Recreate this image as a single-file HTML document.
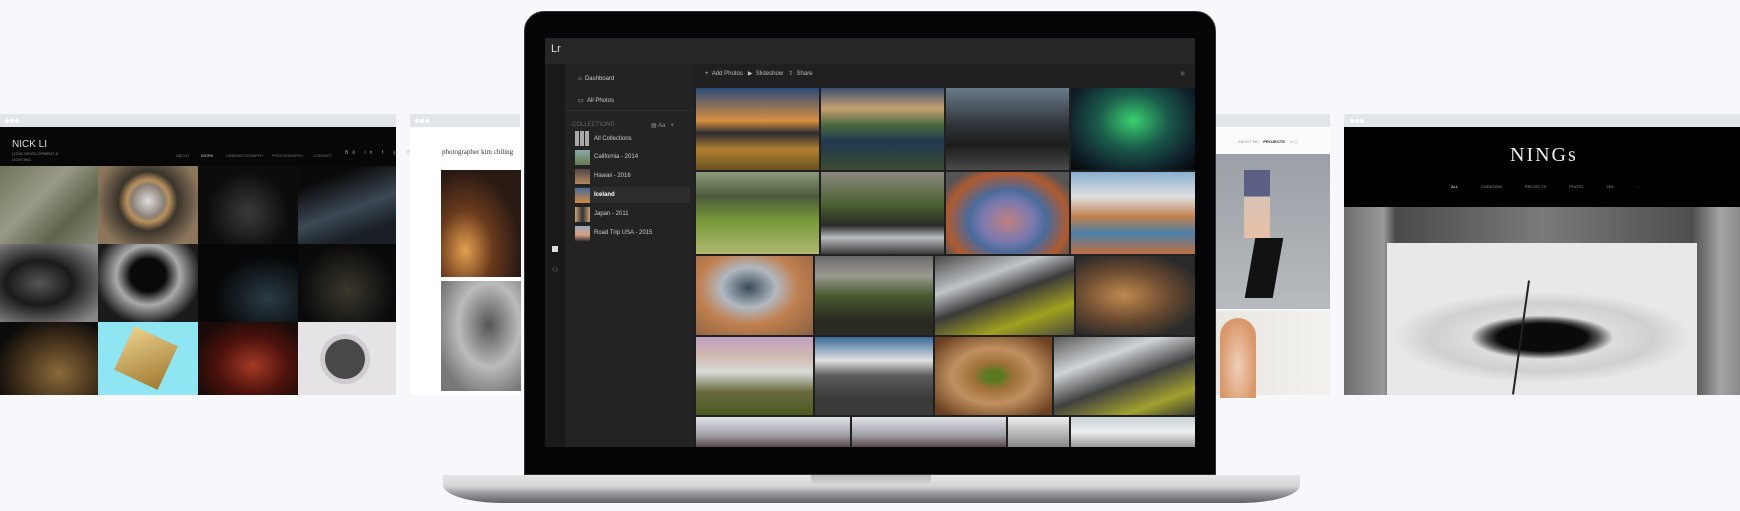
<!DOCTYPE html>
<html><head><meta charset="utf-8"><style>
*{margin:0;padding:0;box-sizing:border-box}
body{width:1740px;height:511px;background:#f6f8fb;position:relative;overflow:hidden;font-family:"Liberation Sans",sans-serif}
.abs{position:absolute}
.bar{background:#e2e6ea;height:13px}
.bar i{position:absolute;top:5px;width:4px;height:4px;border-radius:50%;background:#fff}
.t{position:absolute}
.lr .t{color:#ccc;font-size:6px;white-space:nowrap}
.nv{position:absolute;top:153px;color:#777;font-size:4px;white-space:nowrap}
</style></head><body>

<!-- Left browser -->
<div class="abs bar" style="left:0;top:114px;width:396px"><i style="left:5px"></i><i style="left:10px"></i><i style="left:15px"></i></div>
<div class="abs" style="left:0;top:127px;width:396px;height:268px;background:#070707"></div>
<div class="t" style="left:12px;top:139px;color:#ddd;font-size:10px">NICK LI</div>
<div class="t" style="left:12px;top:151px;color:#888;font-size:4px;line-height:6px">LOOK DEVELOPMENT &amp;<br>LIGHTING</div>
<div class="nv" style="left:176px">ABOUT</div>
<div class="nv" style="left:201px;color:#ccc">WORK</div>
<div class="nv" style="left:226px">CINEMATOGRAPHY</div>
<div class="nv" style="left:272px">PHOTOGRAPHY</div>
<div class="nv" style="left:313px">CONTACT</div>
<div class="t" style="left:345px;top:150px;color:#999;font-size:5px;letter-spacing:4px;white-space:nowrap">Bē in f ◎ ▽</div>
<div class="abs" style="left:0;top:166px;width:98px;height:78px;background:linear-gradient(135deg,#6f7458,#9a9a88 40%,#5d6448 70%,#8b8d7c)"></div>
<div class="abs" style="left:98px;top:166px;width:100px;height:78px;background:radial-gradient(circle at 50% 45%,#ddd 0,#8a7f73 25%,#b8905d 32%,#3a342c 45%,#8c775c 80%)"></div>
<div class="abs" style="left:198px;top:166px;width:100px;height:78px;background:radial-gradient(circle at 50% 60%,#3a3a3a,#0c0c0c 60%)"></div>
<div class="abs" style="left:298px;top:166px;width:98px;height:78px;background:linear-gradient(160deg,#0a0a0a 20%,#3c4854 55%,#1a2025 80%)"></div>
<div class="abs" style="left:0;top:244px;width:98px;height:78px;background:radial-gradient(ellipse at 40% 50%,#555 0,#1a1a1a 40%,#8a8a8a 90%)"></div>
<div class="abs" style="left:98px;top:244px;width:100px;height:78px;background:radial-gradient(ellipse at 50% 40%,#0a0a0a 25%,#aaa 45%,#1b1b1b 75%)"></div>
<div class="abs" style="left:198px;top:244px;width:100px;height:78px;background:radial-gradient(ellipse at 70% 70%,#2a3a44,#050708 55%)"></div>
<div class="abs" style="left:298px;top:244px;width:98px;height:78px;background:radial-gradient(ellipse at 50% 60%,#3b372d,#0a0a0a 70%)"></div>
<div class="abs" style="left:0;top:322px;width:98px;height:73px;background:radial-gradient(ellipse at 60% 70%,#8a6a3a,#3d2c18 50%,#0b0b0b 80%)"></div>
<div class="abs" style="left:98px;top:322px;width:100px;height:73px;background:#8fe6f2;overflow:hidden"><div class="abs" style="left:24px;top:12px;width:48px;height:48px;background:linear-gradient(135deg,#e9d08b,#a17a32);transform:rotate(25deg)"></div></div>
<div class="abs" style="left:198px;top:322px;width:100px;height:73px;background:radial-gradient(ellipse at 55% 60%,#a33a25,#4d120c 45%,#1a0b08 80%)"></div>
<div class="abs" style="left:298px;top:322px;width:98px;height:73px;background:#e6e3e6;overflow:hidden"><div class="abs" style="left:22px;top:12px;width:50px;height:50px;border-radius:50%;background:#4a474a;border:5px solid #cfcbd0"></div></div>

<!-- Second browser -->
<div class="abs bar" style="left:410px;top:114px;width:110px"><i style="left:5px"></i><i style="left:10px"></i><i style="left:15px"></i></div>
<div class="abs" style="left:410px;top:127px;width:110px;height:268px;background:#fff"></div>
<div class="t" style="left:442px;top:148px;color:#333;font-size:7px;font-family:'Liberation Serif',serif">photographer kim chiling</div>
<div class="abs" style="left:441px;top:170px;width:80px;height:107px;background:radial-gradient(ellipse at 30% 75%,#e4a050,#6a3a1c 35%,#2a1a14 70%)"></div>
<div class="abs" style="left:441px;top:281px;width:80px;height:110px;background:radial-gradient(ellipse at 60% 40%,#555 0,#bbb 45%,#777 80%)"></div>

<!-- Third browser -->
<div class="abs bar" style="left:1210px;top:114px;width:120px"></div>
<div class="abs" style="left:1210px;top:127px;width:120px;height:27px;background:#fbfbfb"></div>
<div class="t" style="left:1238px;top:139px;color:#999;font-size:4px">ABOUT ME &nbsp;&nbsp;&nbsp;<b style="color:#222">PROJECTS</b> &nbsp;&nbsp;&nbsp; in ▢</div>
<div class="abs" style="left:1210px;top:154px;width:120px;height:155px;background:linear-gradient(180deg,#9aa0a6,#b7bbbf)"></div>
<div class="abs" style="left:1244px;top:170px;width:26px;height:68px;background:linear-gradient(#5b5f84 0 38%,#d8c3b3 40%,#e8c0a6)"></div>
<div class="abs" style="left:1250px;top:238px;width:28px;height:60px;background:#111;transform:skewX(-10deg)"></div>
<div class="abs" style="left:1210px;top:311px;width:120px;height:84px;background:linear-gradient(90deg,#e9e6e2,#f3f1ee)"></div>
<div class="abs" style="left:1220px;top:318px;width:36px;height:80px;border-radius:18px 18px 0 0;background:radial-gradient(ellipse at 50% 60%,#f0d0b8,#d9986c 70%)"></div>

<!-- Fourth browser -->
<div class="abs bar" style="left:1344px;top:114px;width:396px"><i style="left:6px"></i><i style="left:11px"></i><i style="left:16px"></i></div>
<div class="abs" style="left:1344px;top:127px;width:396px;height:80px;background:#000"></div>
<div class="t" style="left:1510px;top:144px;color:#eee;font-size:20px;font-family:'Liberation Serif',serif;letter-spacing:2px">NINGs</div>
<div class="t" style="left:1451px;top:184px;color:#999;font-size:4px;word-spacing:22px;white-space:nowrap"><span style="color:#fff">ALL</span> CURATION PROJECTS PHOTO 2D1 ...</div>
<div class="abs" style="left:1344px;top:207px;width:396px;height:188px;background:linear-gradient(90deg,#6e6e6e,#9a9a9a 10%,#4a4a4a 13%,#7a7a7a 50%,#4e4e4e 88%,#a5a5a5 95%,#8a8a8a)"></div>
<div class="abs" style="left:1387px;top:243px;width:310px;height:152px;background:radial-gradient(ellipse 48% 30% at 50% 62%,#0a0a0a 0 30%,#555 38%,#ddd 48%,#d0d0d0 75%,#e8e8e8)"></div>
<div class="abs" style="left:1520px;top:280px;width:2px;height:115px;background:#222;transform:rotate(8deg)"></div>

<!-- Laptop -->
<div class="abs" style="left:443px;top:475px;width:857px;height:28px;border-radius:0 0 60px 60px/0 0 18px 18px;background:linear-gradient(180deg,#e4e5e7 0,#d5d6d8 40%,#9a9b9e 65%,#5f6063 100%)"></div>
<div class="abs" style="left:811px;top:475px;width:120px;height:10px;border-radius:0 0 6px 6px;background:linear-gradient(#b8b9bb,#d7d8da)"></div>
<div class="abs" style="left:524px;top:11px;width:692px;height:464px;border-radius:20px 20px 0 0;background:#050508;border:1px solid #333"></div>
<div class="abs" style="left:545px;top:38px;width:650px;height:409px;background:#202020;overflow:hidden">
 <div class="abs" style="left:0;top:0;width:650px;height:26px;background:#262626"></div>
 <div class="t" style="left:6px;top:5px;color:#ddd;font-size:11px">Lr</div>
 <div class="abs" style="left:0;top:26px;width:20px;height:383px;background:#1a1a1a"></div>
 <div class="abs" style="left:7px;top:208px;width:6px;height:6px;background:#ddd"></div>
 <div class="t" style="left:7px;top:228px;color:#777;font-size:7px">⚇</div>
 <div class="abs" style="left:20px;top:26px;width:129px;height:383px;background:#232323"></div>
 <div class="abs" style="left:20px;top:72px;width:129px;height:1px;background:#2e2e2e"></div>
 <div class="lr">
  <div class="t" style="left:33px;top:38px">⌂ &nbsp;Dashboard</div>
  <div class="t" style="left:33px;top:59px">▭ &nbsp;All Photos</div>
  <div class="t" style="left:27px;top:84px;color:#666">COLLECTIONS</div>
  <div class="t" style="left:106px;top:84px;color:#999">▤ Aa &nbsp;&nbsp;+</div>
  <div class="abs" style="left:30px;top:93px;width:15px;height:15px;background:repeating-linear-gradient(90deg,#aaa 0 4px,#232323 4px 5px)"></div>
  <div class="t" style="left:49px;top:98px">All Collections</div>
  <div class="abs" style="left:30px;top:112px;width:15px;height:15px;background:linear-gradient(#8aa,#6a7a50)"></div>
  <div class="t" style="left:49px;top:116px">California - 2014</div>
  <div class="abs" style="left:30px;top:131px;width:15px;height:15px;background:linear-gradient(#544,#b08a60)"></div>
  <div class="t" style="left:49px;top:135px">Hawaii - 2016</div>
  <div class="abs" style="left:29px;top:149px;width:116px;height:16px;background:#2d2d2d"></div>
  <div class="abs" style="left:30px;top:150px;width:15px;height:15px;background:linear-gradient(#4a6a9a,#d08a40)"></div>
  <div class="t" style="left:49px;top:154px;color:#fff;font-weight:bold">Iceland</div>
  <div class="abs" style="left:30px;top:169px;width:15px;height:15px;background:linear-gradient(90deg,#c9a27a,#333,#c9a27a)"></div>
  <div class="t" style="left:49px;top:173px">Japan - 2011</div>
  <div class="abs" style="left:30px;top:188px;width:15px;height:15px;background:linear-gradient(#9ab,#d9a080 60%,#333)"></div>
  <div class="t" style="left:49px;top:192px">Road Trip USA - 2015</div>
  <div class="t" style="left:160px;top:32px;color:#bbb;font-size:6px">+ &nbsp;Add Photos &nbsp;&nbsp;▶ &nbsp;Slideshow &nbsp;&nbsp;⇪ &nbsp;Share</div>
  <div class="t" style="left:635px;top:32px;color:#555">◉</div>
 </div>
 <!-- grid -->
 <div class="abs" style="left:151px;top:50px;width:123px;height:82px;background:linear-gradient(180deg,#2a4a7a,#d89040 40%,#2c2c30 55%,#b08030 75%,#6a5020)"></div>
 <div class="abs" style="left:276px;top:50px;width:123px;height:82px;background:linear-gradient(180deg,#3a5070,#c8a070 25%,#4a6a40 45%,#203850 65%,#3a4a30)"></div>
 <div class="abs" style="left:401px;top:50px;width:123px;height:82px;background:linear-gradient(180deg,#6a7a8a,#303438 45%,#1c1c1c 70%,#4a4a4a)"></div>
 <div class="abs" style="left:526px;top:50px;width:124px;height:82px;background:radial-gradient(ellipse at 50% 40%,#3ad070,#1a5a4a 40%,#10202a 75%,#050505)"></div>
 <div class="abs" style="left:151px;top:134px;width:123px;height:82px;background:linear-gradient(180deg,#8a9a7a,#4a5a3a 30%,#7a9a3a 60%,#b0b870)"></div>
 <div class="abs" style="left:276px;top:134px;width:123px;height:82px;background:linear-gradient(180deg,#8a8a80,#4a6030 40%,#2a2a28 65%,#b8bcc0 80%,#3a3a38)"></div>
 <div class="abs" style="left:401px;top:134px;width:123px;height:82px;background:radial-gradient(ellipse at 50% 60%,#c08080 0,#7a7ab0 30%,#4a6a9a 45%,#b05a30 70%,#555 85%)"></div>
 <div class="abs" style="left:526px;top:134px;width:124px;height:82px;background:linear-gradient(180deg,#8ab0d0,#e0e0e0 30%,#c08050 55%,#4a80a8 75%,#c07040)"></div>
 <div class="abs" style="left:151px;top:218px;width:117px;height:79px;background:radial-gradient(ellipse at 45% 40%,#3a4a5a,#b0b8c0 30%,#c08050 55%,#8a6040)"></div>
 <div class="abs" style="left:270px;top:218px;width:118px;height:79px;background:linear-gradient(180deg,#6a6a6a,#9a9a90 25%,#4a5a30 50%,#2a2a20 80%)"></div>
 <div class="abs" style="left:390px;top:218px;width:139px;height:79px;background:linear-gradient(160deg,#4a4a4a,#c0c4c8 30%,#3a3a3a 50%,#a0a020 75%,#4a4a3a)"></div>
 <div class="abs" style="left:531px;top:218px;width:119px;height:79px;background:radial-gradient(ellipse at 40% 50%,#c08a50,#6a4a30 45%,#2a2a2a 80%)"></div>
 <div class="abs" style="left:151px;top:299px;width:117px;height:78px;background:linear-gradient(180deg,#c0a0c0,#d0b8b0 25%,#d8dcd8 45%,#6a6a40 70%,#4a5a20)"></div>
 <div class="abs" style="left:270px;top:299px;width:118px;height:78px;background:linear-gradient(180deg,#3a6a9a,#e0e0e0 30%,#5a5a58 50%,#3a3a38 80%)"></div>
 <div class="abs" style="left:390px;top:299px;width:117px;height:78px;background:radial-gradient(ellipse at 50% 50%,#5a7a20 0 10%,#a0703a 25%,#c09060 50%,#6a4020 90%)"></div>
 <div class="abs" style="left:509px;top:299px;width:141px;height:78px;background:linear-gradient(160deg,#5a5a5a,#d0d4d8 30%,#404040 55%,#a0a030 80%,#3a3a30)"></div>
 <div class="abs" style="left:151px;top:379px;width:154px;height:30px;background:linear-gradient(180deg,#e0e4e8,#a0a0a8 60%,#5a4a4a)"></div>
 <div class="abs" style="left:307px;top:379px;width:154px;height:30px;background:linear-gradient(180deg,#e0e4e8,#a0a0a8 60%,#5a4a4a)"></div>
 <div class="abs" style="left:463px;top:379px;width:61px;height:30px;background:linear-gradient(180deg,#eee,#888)"></div>
 <div class="abs" style="left:526px;top:379px;width:124px;height:30px;background:linear-gradient(180deg,#c8d0d8,#eee 50%,#999)"></div>
</div>
</body></html>
